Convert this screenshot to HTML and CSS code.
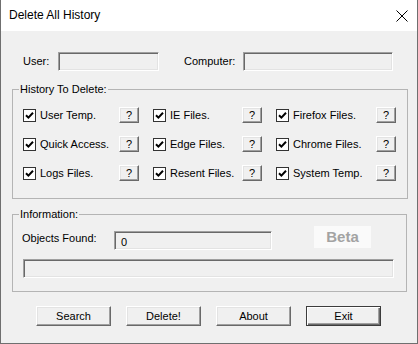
FILE: index.html
```html
<!DOCTYPE html>
<html>
<head>
<meta charset="utf-8">
<link rel="stylesheet" href="styles.css">
</head>
<body>
<div class="window">
  <div class="titlebar">
    <span class="title">Delete All History</span>
    <svg class="close" width="12" height="12" viewBox="0 0 12 12"><path d="M0.5 0.5 L11.5 11.5 M11.5 0.5 L0.5 11.5" stroke="#000" stroke-width="1" fill="none"/></svg>
  </div>
  <div class="content">
    <div class="toprow">
      <span class="lbl-user">User:</span>
      <div class="sunken box-user"></div>
      <span class="lbl-comp">Computer:</span>
      <div class="sunken box-comp"></div>
    </div>

    <div class="group history">
      <div class="legend">History To Delete:</div>
      <div class="grid">
        <div class="item"><span class="cb"><svg width="9" height="9" viewBox="0 0 9 9"><path d="M1 4.2 L3.4 6.6 L8 1.8" stroke="#000" stroke-width="2" fill="none"/></svg></span><span class="label">User Temp.</span><button class="btn q">?</button></div>
        <div class="item"><span class="cb"><svg width="9" height="9" viewBox="0 0 9 9"><path d="M1 4.2 L3.4 6.6 L8 1.8" stroke="#000" stroke-width="2" fill="none"/></svg></span><span class="label">IE Files.</span><button class="btn q">?</button></div>
        <div class="item"><span class="cb"><svg width="9" height="9" viewBox="0 0 9 9"><path d="M1 4.2 L3.4 6.6 L8 1.8" stroke="#000" stroke-width="2" fill="none"/></svg></span><span class="label">Firefox Files.</span><button class="btn q">?</button></div>
        <div class="item"><span class="cb"><svg width="9" height="9" viewBox="0 0 9 9"><path d="M1 4.2 L3.4 6.6 L8 1.8" stroke="#000" stroke-width="2" fill="none"/></svg></span><span class="label">Quick Access.</span><button class="btn q">?</button></div>
        <div class="item"><span class="cb"><svg width="9" height="9" viewBox="0 0 9 9"><path d="M1 4.2 L3.4 6.6 L8 1.8" stroke="#000" stroke-width="2" fill="none"/></svg></span><span class="label">Edge Files.</span><button class="btn q">?</button></div>
        <div class="item"><span class="cb"><svg width="9" height="9" viewBox="0 0 9 9"><path d="M1 4.2 L3.4 6.6 L8 1.8" stroke="#000" stroke-width="2" fill="none"/></svg></span><span class="label">Chrome Files.</span><button class="btn q">?</button></div>
        <div class="item"><span class="cb"><svg width="9" height="9" viewBox="0 0 9 9"><path d="M1 4.2 L3.4 6.6 L8 1.8" stroke="#000" stroke-width="2" fill="none"/></svg></span><span class="label">Logs Files.</span><button class="btn q">?</button></div>
        <div class="item"><span class="cb"><svg width="9" height="9" viewBox="0 0 9 9"><path d="M1 4.2 L3.4 6.6 L8 1.8" stroke="#000" stroke-width="2" fill="none"/></svg></span><span class="label">Resent Files.</span><button class="btn q">?</button></div>
        <div class="item"><span class="cb"><svg width="9" height="9" viewBox="0 0 9 9"><path d="M1 4.2 L3.4 6.6 L8 1.8" stroke="#000" stroke-width="2" fill="none"/></svg></span><span class="label">System Temp.</span><button class="btn q">?</button></div>
      </div>
    </div>

    <div class="group info">
      <div class="legend">Information:</div>
      <div class="inforow">
        <span class="lbl-obj">Objects Found:</span>
        <div class="sunken box-obj">0</div>
        <div class="beta">Beta</div>
      </div>
      <div class="sunken progress"></div>
    </div>

    <div class="buttons">
      <button class="btn main">Search</button>
      <button class="btn main">Delete!</button>
      <button class="btn main">About</button>
      <button class="btn main default">Exit</button>
    </div>
  </div>
</div>
</body>
</html>
```

FILE: styles.css
```css
* { box-sizing: border-box; }
html, body { margin: 0; padding: 0; }
body {
  width: 418px;
  height: 344px;
  overflow: hidden;
  font-family: "Liberation Sans", Arial, sans-serif;
  font-size: 11px;
  line-height: 13px;
  color: #000;
  background: #f0f0f0;
}
.window {
  width: 418px;
  height: 344px;
  border: 1px solid #6f6f6f;
  border-top: none;
  display: flex;
  flex-direction: column;
  background: #f0f0f0;
}
.titlebar {
  height: 31px;
  background: #fff;
  display: flex;
  align-items: center;
  justify-content: space-between;
  padding: 0 9px 1px 8px;
}
.title {
  font-size: 12px;
  line-height: 16px;
}
.close { margin-top: 1px; }
.content {
  flex: 1;
  padding: 21px 0 0 0;
}
.toprow {
  display: flex;
  align-items: center;
  height: 19px;
  padding-left: 22px;
}
.lbl-user { width: 35px; }
.box-user { width: 101px; height: 19px; }
.lbl-comp { width: 59px; margin-left: 25px; }
.box-comp { width: 150px; height: 19px; }

.sunken {
  border: 1px solid;
  border-color: #a0a0a0 #fff #fff #a0a0a0;
  box-shadow: inset 1px 1px 0 #696969, inset -1px -1px 0 #e3e3e3;
  background: #f0f0f0;
}

.group {
  margin-left: 11px;
  width: 395px;
  border: 1px solid #b4b4b4;
}
.legend {
  width: fit-content;
  margin: -7px 0 0 6px;
  padding: 0 1px;
  background: #f0f0f0;
}
.history {
  margin-top: 18px;
  padding: 0 0 17px 0;
  width: 396px;
}
.grid {
  margin: 11px 0 0 10px;
  display: grid;
  grid-template-columns: 116px 109px 120px;
  column-gap: 14px;
  row-gap: 13px;
}
.item {
  display: flex;
  align-items: center;
  height: 16px;
}
.cb {
  width: 13px;
  height: 13px;
  border: 1px solid #333;
  background: #fff;
  display: flex;
  align-items: center;
  justify-content: center;
  margin-right: 4px;
}
.label { flex: 1; white-space: nowrap; }

.btn {
  font-family: "Liberation Sans", Arial, sans-serif;
  font-size: 11px;
  line-height: 13px;
  color: #000;
  background: #f0f0f0;
  border: 1px solid;
  border-color: #fff #696969 #696969 #fff;
  box-shadow: inset -1px -1px 0 #a0a0a0, inset 1px 1px 0 #e3e3e3;
  padding: 0;
  margin: 0;
  display: flex;
  align-items: center;
  justify-content: center;
}
.q { width: 20px; height: 16px; }

.info {
  margin-top: 15px;
  padding: 0 0 13px 0;
}
.inforow {
  margin: 5px 0 0 9px;
  display: flex;
  align-items: flex-start;
  height: 22px;
}
.lbl-obj { width: 92px; margin-top: 6px; }
.box-obj {
  width: 158px;
  height: 19px;
  margin-top: 5px;
  padding: 4px 0 0 6px;
}
.beta {
  margin-left: 42px;
  width: 57px;
  height: 22px;
  background: #fafafa;
  color: #a3a3a3;
  font-weight: bold;
  font-size: 15px;
  line-height: 22px;
  text-align: center;
}
.progress {
  margin: 11px 0 0 10px;
  width: 371px;
  height: 19px;
}

.buttons {
  display: flex;
  gap: 15px;
  margin-top: 14px;
  padding-left: 35px;
}
.main { width: 75px; height: 20px; }
.default {
  border: 1px solid #3c3c3c;
  box-shadow: inset 1px 1px 0 #fff, inset -1px -1px 0 #696969, inset -2px -2px 0 #a0a0a0;
}
```
